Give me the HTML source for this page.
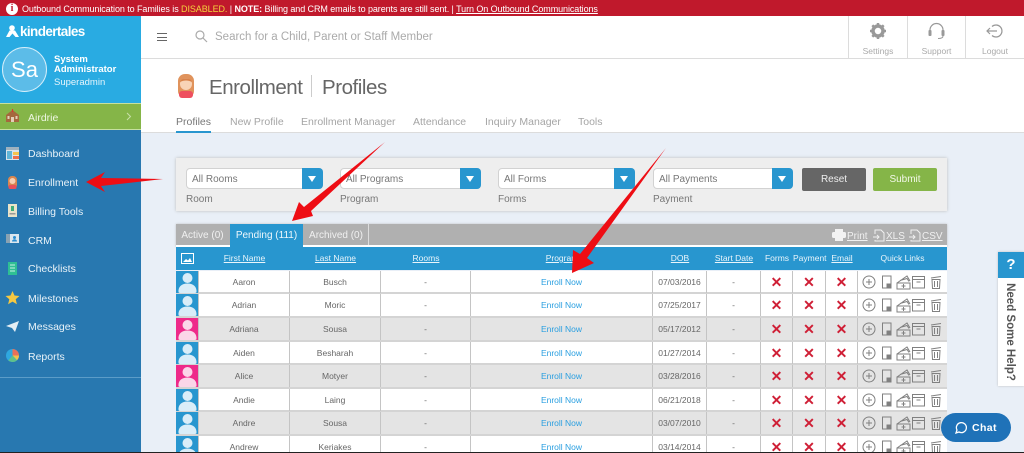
<!DOCTYPE html>
<html style="overflow:hidden"><head><meta charset="utf-8"><style>
*{box-sizing:border-box}
html,body{margin:0;padding:0;width:1024px;height:453px;overflow:hidden}
#w{position:relative;width:1024px;height:453px;overflow:hidden;background:#e9eff7;font-family:"Liberation Sans",sans-serif;color:#666}
.a{position:absolute;white-space:nowrap}
.nav{position:absolute;left:28px;color:#e8f2f8;font-size:10.5px;line-height:14px;white-space:nowrap}
.navi{position:absolute;left:5px;width:15px;height:15px}
.sel{position:absolute;top:168px;height:21px;background:#fff;border:1px solid #d2d2d2;border-radius:4px;font-size:10px;color:#777;line-height:21px;padding-left:5px}
.sel i{position:absolute;right:-1px;top:-1px;width:21px;height:21px;background:#2896cf;border-radius:0 4px 4px 0}
.sel i:after{content:"";position:absolute;left:6px;top:8px;border:4.5px solid transparent;border-top:6px solid #fff;border-bottom:0}
.lab{position:absolute;top:194px;font-size:10px;color:#777;line-height:12px}
.tb{position:absolute;top:116px;font-size:10.5px;line-height:13px;color:#a5a5a5;white-space:nowrap}
.r{position:absolute;left:176px;width:771px;display:grid;grid-template-columns:23px 91px 91px 90px 182px 54px 54px 32px 33px 32px 89px;background:#fff;border-bottom:2px solid #d4d4d4;font-size:8.5px;color:#666;line-height:22px;text-align:center}
.r.g{background:#e4e4e4}
.r>*{border-right:1px solid #c4c4c4;height:22px;overflow:hidden}
.r>*:last-child{border-right:0}
.r b{font-weight:normal;color:#2a9fe0}
.r .x{color:#cf1f36;font-size:14px;font-weight:bold;line-height:22px}
.h{position:absolute;left:176px;top:247px;width:771px;height:23px;background:#2896cf;color:#eaf5fb;font-size:8.5px;line-height:23px}
.h span{position:absolute;text-align:center;top:0}
.h u{text-decoration:underline}
.av{background:#2896cf;padding:0}
.av.p{background:#ee2a8a}
.av svg,.q svg{display:block}
</style></head><body><div id="w">
<svg width="0" height="0" style="position:absolute"><defs>
<symbol id="person" viewBox="0 0 23 22"><circle cx="11.5" cy="7" r="5" fill="#d9edf8"/><path d="M2.500 21c-.5-5 3-8.500 9-8.500s9.500 3.500 9 8.500c0 .5-1 1-1.500 1H4c-.5 0-1.500-.5-1.500-1z" fill="#d9edf8"/></symbol>
<symbol id="personp" viewBox="0 0 23 22"><circle cx="11.500" cy="7" r="5" fill="#fbd6e8"/><path d="M2.500 21c-.5-5 3-8.500 9-8.500s9.500 3.500 9 8.500c0 .5-1 1-1.500 1H4c-.5 0-1.500-.5-1.500-1z" fill="#fbd6e8"/></symbol>
<symbol id="ql" viewBox="0 0 89 22"><g fill="none" stroke="#808080" stroke-width="1"><circle cx="11" cy="11" r="6"/><path d="M8 11h6M11 8v6"/><rect x="24.500" y="5" width="8.500" height="12"/><rect x="29" y="13" width="4" height="4" fill="#808080"/><path d="M39 12l10-7 3 5M42 9.500l7-2 2 3M39 12h13v6H39z"/><path d="M43.500 15h4M45.500 13v4"/><rect x="54.500" y="5.500" width="12" height="11.500"/><path d="M54.500 8.500h12M58.500 11h4"/><path d="M73 7l10-1.500M74 8.500h8l-.5 9h-7zM76.500 10v6M79.500 10v6"/></g></symbol>
</defs></svg>

<div class="a" style="left:0;top:0;width:1024px;height:16px;background:#c0192c;color:#fff;font-size:9px;letter-spacing:-.08px;line-height:18px;padding-left:22px">Outbound Communication to Families is <span style="color:#f5d23c">DISABLED.</span> | <b>NOTE:</b> Billing and CRM emails to parents are still sent. | <u>Turn On Outbound Communications</u></div>
<div class="a" style="left:6px;top:3px;width:12px;height:12px;border-radius:50%;background:#fff;color:#c0192c;font:bold 10px/12px 'Liberation Serif',serif;text-align:center">i</div>

<!-- sidebar -->
<div class="a" style="left:0;top:16px;width:141px;height:87px;background:#29abe2"></div>
<div class="a" style="left:0;top:103px;width:141px;height:27px;background:#85b548;border-top:1px solid #c6e09f;border-bottom:1px solid #c6e09f"></div>
<div class="a" style="left:0;top:130px;width:141px;height:323px;background:#2878b0"></div>
<svg class="a" style="left:6px;top:25px" width="13" height="12" viewBox="0 0 13 12"><circle cx="6" cy="3" r="2.800" fill="#fff"/><path d="M0 12l3.500-6.500h5.500L13 12H9.500L6.500 8.500 3.500 12z" fill="#fff"/></svg>
<div class="a" style="left:20px;top:22px;color:#fff;font-size:13.500px;font-weight:bold;line-height:20px;letter-spacing:-.6px">kindertales</div>
<div class="a" style="left:2px;top:47px;width:45px;height:45px;border-radius:50%;background:#5cbce8;border:1px solid #d5eefa;color:#fff;font-size:22px;line-height:43px;text-align:center">Sa</div>
<div class="a" style="left:54px;top:55px;color:#fff;font-size:9.500px;font-weight:bold;line-height:9.500px">System<br>Administrator</div>
<div class="a" style="left:54px;top:77px;color:#e6f5fc;font-size:9.500px;line-height:12px">Superadmin</div>
<svg class="a" style="left:6px;top:109px" width="13" height="14" viewBox="0 0 13 14"><path d="M0 6l6.500-5 6.500 5v7H0z" fill="#a5683d"/><rect x="5" y="8" width="3" height="5" fill="#e3d0b8"/><rect x="1.500" y="7" width="2" height="3" fill="#e3d0b8"/><rect x="9.500" y="7" width="2" height="3" fill="#e3d0b8"/><path d="M6 0h1v3H6z" fill="#d33"/></svg>
<div class="nav" style="top:111px;color:#eef6e2">Airdrie</div>
<svg class="a" style="left:126px;top:112px" width="6" height="9" viewBox="0 0 6 9"><path d="M1 1l3.500 3.500L1 8" fill="none" stroke="#c8dfa8"/></svg>

<svg class="navi" style="top:146px" viewBox="0 0 15 15"><rect x="1" y="1" width="13" height="13" fill="#d9e3ea"/><rect x="1" y="1" width="13" height="3" fill="#9fb2bf"/><rect x="2" y="5" width="5" height="8" fill="#5fb4d8"/><rect x="8" y="10" width="6" height="3" fill="#ec6d4a"/><rect x="8" y="6" width="6" height="3" fill="#f4c34d"/></svg>
<div class="nav" style="top:147px">Dashboard</div>
<svg class="navi" style="top:175px" viewBox="0 0 15 15"><rect x="3" y="1" width="9" height="13" rx="4" fill="#d8864f"/><circle cx="7.500" cy="6" r="3" fill="#f6cfb2"/><rect x="3.500" y="10" width="8" height="4" rx="1.500" fill="#e8505b"/></svg>
<div class="nav" style="top:176px">Enrollment</div>
<svg class="navi" style="top:203px" viewBox="0 0 15 15"><path d="M3 1h9v13H3z" fill="#e9e3c9"/><rect x="6" y="3" width="3" height="5" fill="#3fae7a"/><rect x="4.500" y="10" width="6" height="1.500" fill="#999"/></svg>
<div class="nav" style="top:205px">Billing Tools</div>
<svg class="navi" style="top:232px" viewBox="0 0 15 15"><rect x="1" y="2" width="13" height="9" fill="#dbe6ee"/><rect x="1" y="2" width="4" height="9" fill="#8aa2b2"/><circle cx="9.500" cy="5.500" r="1.500" fill="#2b8ed0"/><path d="M7 9.500c0-3 5-3 5 0z" fill="#2b8ed0"/></svg>
<div class="nav" style="top:234px">CRM</div>
<svg class="navi" style="top:261px" viewBox="0 0 15 15"><rect x="3" y="1" width="9" height="13" fill="#2fbf94"/><path d="M5 4h5M5 7h5M5 10h5" stroke="#c9f0e3" stroke-width="1"/></svg>
<div class="nav" style="top:262px">Checklists</div>
<svg class="navi" style="top:290px" viewBox="0 0 15 15"><path d="M7.500 1l2 4.500 5 .5-3.800 3.300 1.200 5-4.400-2.700-4.400 2.700 1.200-5L.5 6l5-.5z" fill="#f5c842"/></svg>
<div class="nav" style="top:292px">Milestones</div>
<svg class="navi" style="top:319px" viewBox="0 0 15 15"><path d="M1 7l13-5-4 11-3-4z" fill="#e4eef4"/></svg>
<div class="nav" style="top:320px">Messages</div>
<svg class="navi" style="top:348px" viewBox="0 0 15 15"><circle cx="7.500" cy="7.500" r="6.500" fill="#2fa8df"/><path d="M7.500 7.500V1a6.500 6.500 0 0 1 6.500 6.500z" fill="#e8705a"/><path d="M7.500 7.500H14a6.500 6.500 0 0 1-2 4.700z" fill="#f1c24b"/><path d="M7.500 7.500l4.500 4.700a6.500 6.500 0 0 1-8.700.3z" fill="#5fc08a"/></svg>
<div class="nav" style="top:350px">Reports</div>
<div class="a" style="left:0;top:377px;width:141px;height:1px;background:#5b9cc8"></div>

<!-- header -->
<div class="a" style="left:141px;top:16px;width:883px;height:43px;background:#fff;border-bottom:1px solid #dcdcdc"></div>
<div class="a" style="left:157px;top:33px;width:10px;height:8px;border-top:1.500px solid #666;border-bottom:1.500px solid #666"></div>
<div class="a" style="left:157px;top:36.500px;width:10px;height:1.500px;background:#666"></div>
<svg class="a" style="left:195px;top:30px" width="13" height="13" viewBox="0 0 13 13"><circle cx="5" cy="5" r="4" fill="none" stroke="#aaa" stroke-width="1.200"/><path d="M8 8l4 4" stroke="#aaa" stroke-width="1.200"/></svg>
<div class="a" style="left:215px;top:30px;font-size:11.500px;line-height:15px;color:#aaa">Search for a Child, Parent or Staff Member</div>
<div class="a" style="left:848px;top:16px;width:1px;height:42px;background:#dcdcdc"></div>
<div class="a" style="left:907px;top:16px;width:1px;height:42px;background:#dcdcdc"></div>
<div class="a" style="left:965px;top:16px;width:1px;height:42px;background:#dcdcdc"></div>
<svg class="a" style="left:869px;top:22px" width="18" height="18" viewBox="0 0 18 18"><circle cx="9" cy="9" r="5" fill="none" stroke="#999" stroke-width="3.500"/><path d="M9 1v3M9 14v3M1 9h3M14 9h3M3.300 3.300l2 2M12.700 12.700l2 2M14.700 3.300l-2 2M3.300 14.700l2-2" stroke="#999" stroke-width="2.500"/></svg>
<div class="a" style="left:849px;top:46px;width:58px;text-align:center;font-size:8.500px;line-height:11px;color:#aaa">Settings</div>
<svg class="a" style="left:927px;top:22px" width="19" height="18" viewBox="0 0 19 18"><path d="M3 10V8a6.500 6.500 0 0 1 13 0v2" fill="none" stroke="#999" stroke-width="1.200"/><rect x="1.500" y="8" width="3" height="6" rx="1" fill="#999"/><rect x="14.500" y="8" width="3" height="6" rx="1" fill="#999"/><path d="M16 14c0 2-2 2.500-5 2.500" fill="none" stroke="#999"/></svg>
<div class="a" style="left:908px;top:46px;width:57px;text-align:center;font-size:8.500px;line-height:11px;color:#aaa">Support</div>
<svg class="a" style="left:986px;top:23px" width="18" height="16" viewBox="0 0 18 16"><path d="M6 3.500a6 6 0 1 1 0 9" fill="none" stroke="#999" stroke-width="1.200"/><path d="M1 8h10M4 5L1 8l3 3" fill="none" stroke="#999" stroke-width="1.200"/></svg>
<div class="a" style="left:966px;top:46px;width:58px;text-align:center;font-size:8.500px;line-height:11px;color:#aaa">Logout</div>

<!-- title -->
<div class="a" style="left:141px;top:59px;width:883px;height:74px;background:#fff;border-bottom:1px solid #dcdcdc"></div>
<svg class="a" style="left:176px;top:73px" width="20" height="26" viewBox="0 0 20 26"><rect x="2" y="1" width="16" height="24" rx="7" fill="#e0935c"/><circle cx="10" cy="11" r="6" fill="#f8d3b6"/><path d="M4 9c1-5 11-5 12 0-4-2-8-2-12 0z" fill="#d8824a"/><rect x="3" y="18" width="14" height="7" rx="3" fill="#ee4f5f"/></svg>
<div class="a" style="left:209px;top:74px;font-size:20.500px;line-height:27px;color:#666;letter-spacing:-.45px">Enrollment</div>
<div class="a" style="left:311px;top:75px;width:1px;height:22px;background:#ccc"></div>
<div class="a" style="left:322px;top:74px;font-size:20.500px;line-height:27px;color:#666;letter-spacing:-.45px">Profiles</div>
<div class="tb" style="left:176px;color:#777">Profiles</div>
<div class="a" style="left:176px;top:131px;width:35px;height:2px;background:#2896cf"></div>
<div class="tb" style="left:230px">New Profile</div>
<div class="tb" style="left:301px">Enrollment Manager</div>
<div class="tb" style="left:413px">Attendance</div>
<div class="tb" style="left:485px">Inquiry Manager</div>
<div class="tb" style="left:578px">Tools</div>

<!-- filters -->
<div class="a" style="left:176px;top:158px;width:771px;height:53px;background:#eee;box-shadow:0 0 3px #bbb"></div>
<div class="sel" style="left:186px;width:137px">All Rooms<i></i></div><div class="lab" style="left:186px">Room</div>
<div class="sel" style="left:340px;width:141px">All Programs<i></i></div><div class="lab" style="left:340px">Program</div>
<div class="sel" style="left:498px;width:137px">All Forms<i></i></div><div class="lab" style="left:498px">Forms</div>
<div class="sel" style="left:653px;width:140px">All Payments<i></i></div><div class="lab" style="left:653px">Payment</div>
<div class="a" style="left:802px;top:168px;width:64px;height:23px;background:#666;border-radius:2px;color:#eee;font-size:10px;line-height:24px;text-align:center">Reset</div>
<div class="a" style="left:873px;top:168px;width:64px;height:23px;background:#85b548;border-radius:2px;color:#f2f8e8;font-size:10px;line-height:24px;text-align:center">Submit</div>

<!-- tabs -->
<div class="a" style="left:176px;top:224px;width:771px;height:23px;background:#b0b0b0;box-shadow:0 0 2px #bbb;border-bottom:2px solid #fff"></div>
<div class="a" style="left:176px;top:224px;width:53px;height:21px;color:#f0f0f0;font-size:10px;line-height:24px;text-align:center">Active (0)</div>
<div class="a" style="left:230px;top:224px;width:73px;height:23px;background:#2896cf;color:#eef7fc;font-size:10px;line-height:24px;text-align:center">Pending (111)</div>
<div class="a" style="left:304px;top:224px;width:65px;height:21px;color:#f0f0f0;font-size:10px;line-height:24px;text-align:center;border-right:1px solid #ddd">Archived (0)</div>
<svg class="a" style="left:832px;top:229px" width="14" height="13" viewBox="0 0 14 13"><rect x="3" y="0" width="8" height="4" fill="#f2f2f2"/><rect x="0" y="3" width="14" height="6" rx="1.500" fill="#f2f2f2"/><rect x="3" y="8" width="8" height="4" fill="#f2f2f2"/></svg>
<div class="a" style="left:847px;top:231px;color:#f0f0f0;font-size:10px;line-height:12px;text-decoration:underline">Print</div>
<svg class="a" style="left:873px;top:229px" width="12" height="13" viewBox="0 0 12 13"><path d="M2 5V1h6l3 3v8H2v-1M0 8h6M4 6l2 2-2 2" fill="none" stroke="#f0f0f0"/></svg>
<div class="a" style="left:886px;top:231px;color:#f0f0f0;font-size:10px;line-height:12px;text-decoration:underline">XLS</div>
<svg class="a" style="left:909px;top:229px" width="12" height="13" viewBox="0 0 12 13"><path d="M2 5V1h6l3 3v8H2v-1M0 8h6M4 6l2 2-2 2" fill="none" stroke="#f0f0f0"/></svg>
<div class="a" style="left:922px;top:231px;color:#f0f0f0;font-size:10px;line-height:12px;text-decoration:underline">CSV</div>

<!-- table header -->
<div class="h">
<svg style="position:absolute;left:5px;top:6px" width="13" height="11" viewBox="0 0 13 11"><rect x=".5" y=".5" width="12" height="10" fill="none" stroke="#fff"/><path d="M2 9l3-3 2 1.500 2-2.500 2 4z" fill="#fff"/></svg>
<span style="left:23px;width:91px"><u>First Name</u></span>
<span style="left:114px;width:91px"><u>Last Name</u></span>
<span style="left:205px;width:90px"><u>Rooms</u></span>
<span style="left:295px;width:182px"><u>Program</u></span>
<span style="left:477px;width:54px"><u>DOB</u></span>
<span style="left:531px;width:54px"><u>Start Date</u></span>
<span style="left:585px;width:32px">Forms</span>
<span style="left:617px;width:33px">Payment</span>
<span style="left:650px;width:32px"><u>Email</u></span>
<span style="left:682px;width:89px">Quick Links</span>
</div>

<!-- rows -->
<div class="r" style="top:271px;height:23px"><div class="av"><svg width="23" height="22"><use href="#person"/></svg></div><div>Aaron</div><div>Busch</div><div>-</div><div><b>Enroll Now</b></div><div>07/03/2016</div><div>-</div><div class="x">✕</div><div class="x">✕</div><div class="x">✕</div><div class="q"><svg width="89" height="22"><use href="#ql"/></svg></div></div>
<div class="r" style="top:294px;height:24px"><div class="av"><svg width="23" height="22"><use href="#person"/></svg></div><div>Adrian</div><div>Moric</div><div>-</div><div><b>Enroll Now</b></div><div>07/25/2017</div><div>-</div><div class="x">✕</div><div class="x">✕</div><div class="x">✕</div><div class="q"><svg width="89" height="22"><use href="#ql"/></svg></div></div>
<div class="r g" style="top:318px;height:24px"><div class="av p"><svg width="23" height="22"><use href="#personp"/></svg></div><div>Adriana</div><div>Sousa</div><div>-</div><div><b>Enroll Now</b></div><div>05/17/2012</div><div>-</div><div class="x">✕</div><div class="x">✕</div><div class="x">✕</div><div class="q"><svg width="89" height="22"><use href="#ql"/></svg></div></div>
<div class="r" style="top:342px;height:23px"><div class="av"><svg width="23" height="22"><use href="#person"/></svg></div><div>Aiden</div><div>Besharah</div><div>-</div><div><b>Enroll Now</b></div><div>01/27/2014</div><div>-</div><div class="x">✕</div><div class="x">✕</div><div class="x">✕</div><div class="q"><svg width="89" height="22"><use href="#ql"/></svg></div></div>
<div class="r g" style="top:365px;height:24px"><div class="av p"><svg width="23" height="22"><use href="#personp"/></svg></div><div>Alice</div><div>Motyer</div><div>-</div><div><b>Enroll Now</b></div><div>03/28/2016</div><div>-</div><div class="x">✕</div><div class="x">✕</div><div class="x">✕</div><div class="q"><svg width="89" height="22"><use href="#ql"/></svg></div></div>
<div class="r" style="top:389px;height:23px"><div class="av"><svg width="23" height="22"><use href="#person"/></svg></div><div>Andie</div><div>Laing</div><div>-</div><div><b>Enroll Now</b></div><div>06/21/2018</div><div>-</div><div class="x">✕</div><div class="x">✕</div><div class="x">✕</div><div class="q"><svg width="89" height="22"><use href="#ql"/></svg></div></div>
<div class="r g" style="top:412px;height:24px"><div class="av"><svg width="23" height="22"><use href="#person"/></svg></div><div>Andre</div><div>Sousa</div><div>-</div><div><b>Enroll Now</b></div><div>03/07/2010</div><div>-</div><div class="x">✕</div><div class="x">✕</div><div class="x">✕</div><div class="q"><svg width="89" height="22"><use href="#ql"/></svg></div></div>
<div class="r" style="top:436px;height:24px"><div class="av"><svg width="23" height="22"><use href="#person"/></svg></div><div>Andrew</div><div>Keriakes</div><div>-</div><div><b>Enroll Now</b></div><div>03/14/2014</div><div>-</div><div class="x">✕</div><div class="x">✕</div><div class="x">✕</div><div class="q"><svg width="89" height="22"><use href="#ql"/></svg></div></div>

<!-- help -->
<div class="a" style="left:998px;top:252px;width:26px;height:134px;background:#fff;box-shadow:0 0 2px #bbb"></div>
<div class="a" style="left:998px;top:252px;width:26px;height:26px;background:#2896cf;color:#fff;font-size:15px;font-weight:bold;line-height:26px;text-align:center">?</div>
<div class="a" style="left:960px;top:325px;width:100px;height:14px;transform:rotate(90deg);font-size:11.500px;font-weight:bold;line-height:14px;color:#555;text-align:center">Need Some Help?</div>

<!-- chat -->
<div class="a" style="left:941px;top:413px;width:70px;height:29px;border-radius:15px;background:#1f72b8"></div>
<svg class="a" style="left:954px;top:421px" width="14" height="14" viewBox="0 0 14 14"><path d="M2 12l1-3a5 5 0 1 1 2 2z" fill="none" stroke="#fff" stroke-width="1.300"/></svg>
<div class="a" style="left:972px;top:421px;color:#fff;font-size:10.500px;font-weight:bold;line-height:14px;letter-spacing:.4px">Chat</div>

<!-- arrows -->
<svg class="a" style="left:0;top:0" width="1024" height="453" viewBox="0 0 1024 453">
<polygon points="86,182 105,172 101,178 163,179 101,186 105,192" fill="#ee0d14"/>
<polygon points="292,221 299,202 304,207 385,142 311,211 313,216" fill="#ee0d14"/>
<polygon points="572,273 573,250 580,254 666,148 587,258 594,263" fill="#ee0d14"/>
</svg>
<div class="a" style="left:0;top:452px;width:1024px;height:1px;background:#222"></div>
</div></body></html>
